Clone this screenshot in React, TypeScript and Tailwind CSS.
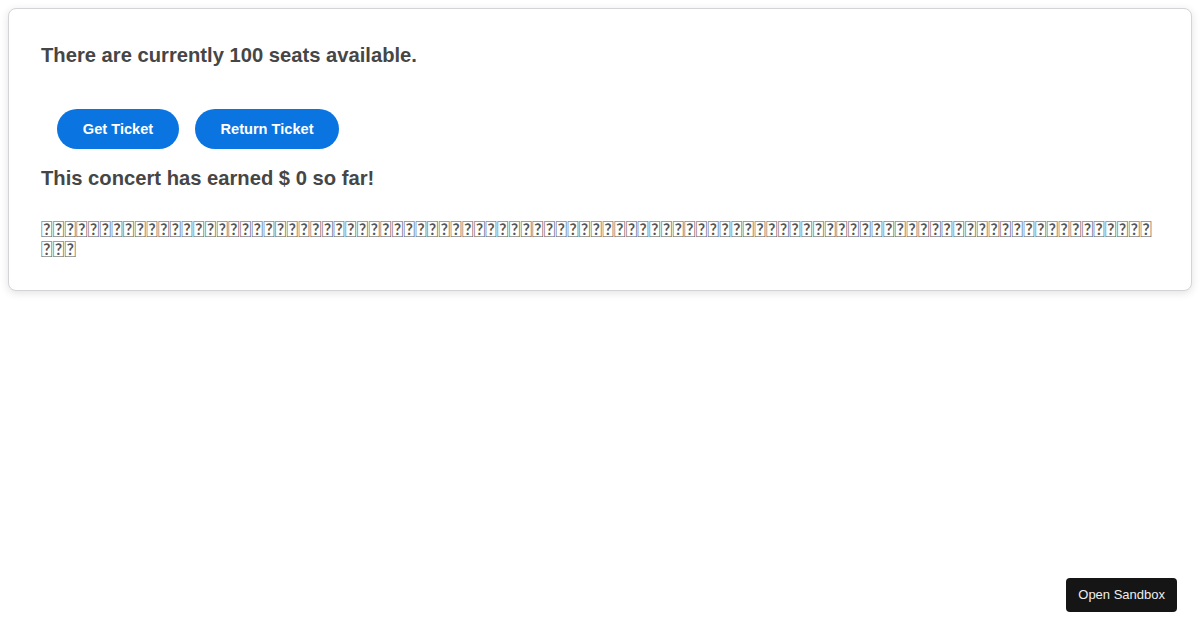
const App = () => {
    // the reference shows 98 missing-glyph boxes here
    const garbled = "\uE000".repeat(98);
    return (
        <div className="min-h-[630px] bg-white p-2 font-['Liberation_Sans',Arial,sans-serif] text-[#464646]">
            <div className="rounded-lg border border-[#d4d4d8] bg-white px-8 pt-[34px] pb-[31px] shadow-[0_2px_8px_rgba(0,0,0,0.12)]">
                <h2 className="text-[20.2px] leading-6 font-bold">
                    There are currently 100 seats available.
                </h2>

                <div className="mt-[42px] ml-4 flex gap-4">
                    <button className="h-10 w-[122px] rounded-full bg-[#0a74e0] pt-[2px] text-[14.6px] font-bold text-white">
                        Get Ticket
                    </button>
                    <button className="h-10 w-[144px] rounded-full bg-[#0a74e0] pt-[2px] text-[14.6px] font-bold text-white">
                        Return Ticket
                    </button>
                </div>

                <h2 className="mt-[17px] text-[20.2px] leading-6 font-bold">
                    This concert has earned $ 0 so far!
                </h2>

                <p className="mt-[29px] font-['Lato',sans-serif] text-[22px] leading-5 text-[#555] [overflow-wrap:anywhere] [word-break:break-all]">
                    {garbled}
                </p>
            </div>

            <button className="fixed right-[23px] bottom-[18px] h-[34px] rounded bg-[#151515] px-3 text-[13px] text-[#eee]">
                Open Sandbox
            </button>
        </div>
    );
};
export default App;
